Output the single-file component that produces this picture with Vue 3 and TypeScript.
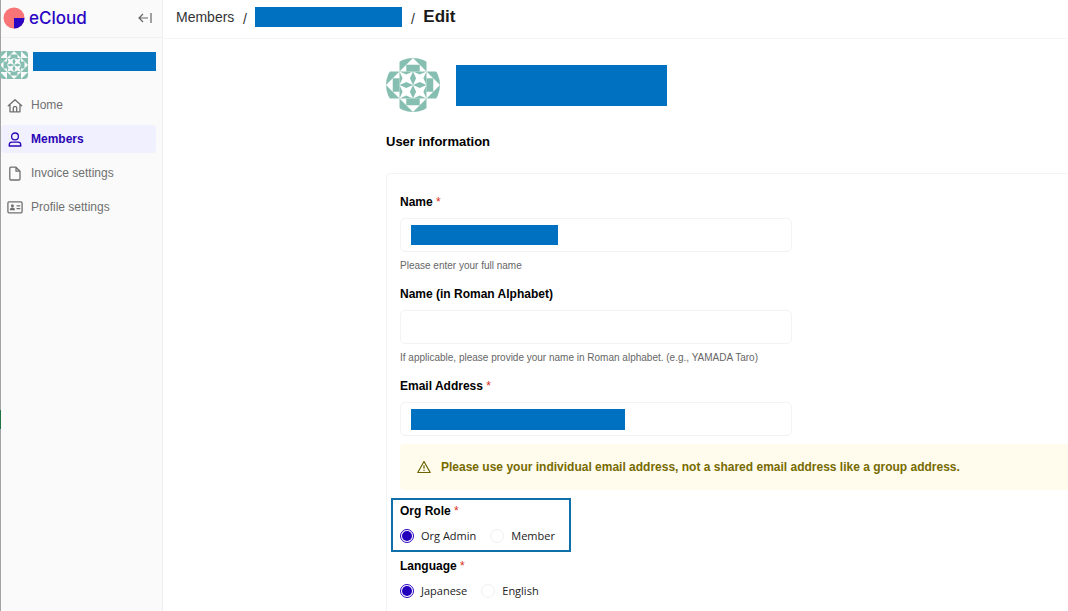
<script setup lang="ts">
import { ref } from 'vue'

interface NavItem {
  id: string
  label: string
  active?: boolean
}

const navItems: NavItem[] = [
  { id: 'home', label: 'Home' },
  { id: 'members', label: 'Members', active: true },
  { id: 'invoice', label: 'Invoice settings' },
  { id: 'profile', label: 'Profile settings' },
]

const roles = ['Org Admin', 'Member']
const languages = ['Japanese', 'English']

const name = ref('')
const romanName = ref('')
const email = ref('')
const role = ref('Org Admin')
const language = ref('Japanese')
const quarterTurns = [0, 90, 180, 270]
</script>

<template>
  <svg class="defs" width="0" height="0" aria-hidden="true">
    <defs>
      <g id="identicon-quarter">
        <path fill="#86bfb1" d="M0 0H10L0 10Z" />
        <path fill="#86bfb1" d="M10 0H20L10 10Z" />
        <path fill="#86bfb1" d="M20 0H30V10Z" />
        <path fill="#86bfb1" d="M15 5H25V10H15Z" />
        <path
          fill="#86bfb1"
          fill-rule="evenodd"
          d="M10 10H20V20H10ZM10 10L15 12.3L20 10L17.7 15L20 20L15 17.7L10 20L12.3 15Z"
        />
      </g>
      <g id="identicon">
        <use
          v-for="turn in quarterTurns"
          :key="turn"
          href="#identicon-quarter"
          :transform="`rotate(${turn} 20 20)`"
        />
      </g>
    </defs>
  </svg>

  <div class="app">
    <aside class="sidebar">
      <span class="edge-mark"></span>
      <div class="brand">
        <a class="logo" href="#">
          <svg width="22" height="22" viewBox="0 0 22 22" aria-hidden="true">
            <circle cx="11" cy="11" r="10.5" fill="#f87477" />
            <path fill="#2b05c4" d="M11 11H21.5A10.5 10.5 0 0 1 11 21.5Z" />
          </svg>
          <span>eCloud</span>
        </a>
        <button class="collapse" type="button" aria-label="Collapse sidebar">
          <svg width="14" height="12" viewBox="0 0 14 12" fill="none" stroke="#666" stroke-width="1.2">
            <path d="M10 6H1M5 2L1 6L5 10M13 1V11" />
          </svg>
        </button>
      </div>

      <div class="account">
        <svg class="account-icon" width="28" height="28" viewBox="0 0 40 40" aria-hidden="true">
          <use href="#identicon" />
        </svg>
        <span class="masked account-name"></span>
      </div>

      <nav class="nav">
        <a
          v-for="item in navItems"
          :key="item.id"
          href="#"
          class="nav-item"
          :class="{ active: item.active }"
        >
          <svg
            width="16"
            height="16"
            viewBox="0 0 16 16"
            fill="none"
            stroke="currentColor"
            stroke-width="1.3"
            stroke-linejoin="round"
            stroke-linecap="round"
            aria-hidden="true"
          >
            <template v-if="item.id === 'home'">
              <path d="M1.3 8.7L8 2.7L14.7 8.7M3 7.5V14.8H13V7.5M6.3 14.5V10.7Q6.3 9.7 7.3 9.7H8.7Q9.7 9.7 9.7 10.7V14.5" />
            </template>
            <template v-else-if="item.id === 'members'">
              <circle cx="8" cy="5.4" r="3.4" />
              <path d="M2.2 15V14Q2.2 11.2 5 11.2H11Q13.8 11.2 13.8 14V15Z" />
            </template>
            <template v-else-if="item.id === 'invoice'">
              <path d="M3.8 2.2H9L13 6.2V13.8Q13 15 11.8 15H3.8Q2.8 15 2.8 13.8V3.4Q2.8 2.2 3.8 2.2ZM9 2.4V6.2H12.8" />
            </template>
            <template v-else>
              <rect x="0.9" y="2.8" width="14.2" height="11" rx="1.2" />
              <circle cx="5.4" cy="6.8" r="1.5" fill="currentColor" stroke="none" />
              <path d="M2.8 11.3Q2.8 8.6 5.4 8.6T8 11.3Z" fill="currentColor" stroke="none" />
              <path d="M10 6.8H12.8M10 9.6H12.8" />
            </template>
          </svg>
          <span>{{ item.label }}</span>
        </a>
      </nav>
    </aside>

    <div class="page">
      <header class="topbar">
        <a class="crumb" href="#">Members</a>
        <span class="slash">/</span>
        <span class="masked crumb-name"></span>
        <span class="slash">/</span>
        <h1>Edit</h1>
      </header>

      <main class="content">
        <div class="profile">
          <svg class="avatar" width="54" height="54" viewBox="0 0 40 40" aria-hidden="true">
            <use href="#identicon" />
          </svg>
          <span class="masked profile-name"></span>
        </div>

        <h2>User information</h2>

        <form class="card" @submit.prevent>
          <div class="field">
            <label class="title" for="name">Name <span class="required">*</span></label>
            <div class="box">
              <span class="masked name-value"></span>
              <input id="name" v-model="name" type="text" />
            </div>
            <p class="hint">Please enter your full name</p>
          </div>

          <div class="field">
            <label class="title" for="roman">Name (in Roman Alphabet)</label>
            <div class="box">
              <input id="roman" v-model="romanName" type="text" />
            </div>
            <p class="hint">
              If applicable, please provide your name in Roman alphabet. (e.g., YAMADA Taro)
            </p>
          </div>

          <div class="field">
            <label class="title" for="email">Email Address <span class="required">*</span></label>
            <div class="box">
              <span class="masked email-value"></span>
              <input id="email" v-model="email" type="email" />
            </div>
          </div>

          <div class="notice">
            <svg
              width="14"
              height="14"
              viewBox="0 0 14 14"
              fill="none"
              stroke="#6b6300"
              stroke-width="1.2"
              stroke-linejoin="round"
              aria-hidden="true"
            >
              <path d="M7 1.5L13.2 12.5H0.8ZM7 5.2V8.8M7 9.8V11" />
            </svg>
            <span>Please use your individual email address, not a shared email address like a group address.</span>
          </div>

          <fieldset class="choices highlighted">
            <legend class="title">Org Role <span class="required">*</span></legend>
            <div class="options">
              <label v-for="option in roles" :key="option">
                <input v-model="role" type="radio" name="role" :value="option" />
                {{ option }}
              </label>
            </div>
          </fieldset>

          <fieldset class="choices">
            <legend class="title">Language <span class="required">*</span></legend>
            <div class="options">
              <label v-for="option in languages" :key="option">
                <input v-model="language" type="radio" name="language" :value="option" />
                {{ option }}
              </label>
            </div>
          </fieldset>
        </form>
      </main>
    </div>
  </div>
</template>

<style>
body {
  margin: 0;
  overflow: hidden;
  background: #fff;
}
</style>

<style scoped>
.defs {
  position: absolute;
}

.app {
  display: flex;
  height: 100vh;
  overflow: hidden;
  font-family: 'Liberation Sans', Arial, sans-serif;
  font-size: 12px;
  line-height: 16px;
  color: #000;
}

a {
  color: inherit;
  text-decoration: none;
}

.masked {
  flex: none;
  background: #0070c0;
}

.sidebar {
  position: relative;
  box-sizing: border-box;
  flex: none;
  width: 163px;
  background: #fafafa;
  border-left: 1px solid #a3a3a3;
  border-right: 1px solid #f0f0f0;
}

.edge-mark {
  position: absolute;
  left: -1px;
  top: 410px;
  width: 1px;
  height: 19px;
  background: #217346;
}

.brand {
  display: flex;
  align-items: center;
  justify-content: space-between;
  box-sizing: border-box;
  height: 38px;
  padding: 0 10px 2px 2px;
  border-bottom: 1px solid #f0f0f0;
}

.logo {
  display: flex;
  align-items: center;
  gap: 4px;
  font-family: Inter, 'Liberation Sans', sans-serif;
  font-size: 17px;
  font-weight: 500;
  color: #2b05c4;
}

.collapse {
  display: flex;
  padding: 0;
  border: 0;
  background: none;
}

.account {
  display: flex;
  align-items: flex-start;
  gap: 5px;
  margin-top: 13px;
}

.account-icon {
  margin-left: -1px;
  border-radius: 4px;
}

.account-name {
  width: 123px;
  height: 19px;
  margin-top: 1px;
}

.nav {
  display: flex;
  flex-direction: column;
  gap: 6px;
  margin: 12px 6px 0 0;
}

.nav-item {
  display: flex;
  align-items: center;
  gap: 8px;
  height: 28px;
  padding-left: 6px;
  border-radius: 4px;
  color: #707070;
}

.nav-item.active {
  background: #f0f0ff;
  color: #2b05b4;
  font-weight: bold;
}

.page {
  flex: 1;
  min-width: 0;
}

.topbar {
  display: flex;
  align-items: center;
  box-sizing: border-box;
  height: 39px;
  padding: 0 13px 4px;
  border-bottom: 1px solid #f5f5f5;
  font-size: 14px;
  color: #333;
}

.slash {
  width: 21px;
  padding-top: 4px;
  text-align: center;
}

.crumb-name {
  width: 147px;
  height: 20px;
}

h1 {
  margin: 0;
  font-size: 17px;
  line-height: 20px;
  color: #1a1a1a;
}

.content {
  padding: 19px 0 0 223px;
}

.profile {
  display: flex;
  align-items: center;
  gap: 16px;
}

.avatar {
  border-radius: 50%;
}

.profile-name {
  width: 211px;
  height: 41px;
}

h2 {
  margin: 22px 0 23px;
  font-size: 13px;
  line-height: 16px;
}

.card {
  padding: 20px 0 20px 13px;
  border: 1px solid #f3f3f3;
  border-right: 0;
  border-radius: 4px 0 0 0;
}

.title {
  display: block;
  padding: 0;
  font-weight: bold;
}

.required {
  font-weight: normal;
  color: #d92d20;
}

.field + .field {
  margin-top: 12px;
}

.box {
  display: flex;
  align-items: center;
  box-sizing: border-box;
  max-width: 392px;
  height: 34px;
  margin-top: 8px;
  padding: 0 10px;
  border: 1px solid #f3f3f3;
  border-radius: 5px;
}

.box input {
  flex: 1;
  min-width: 0;
  padding: 0;
  border: 0;
  outline: 0;
  background: none;
  font: inherit;
}

.name-value {
  width: 147px;
  height: 20px;
}

.email-value {
  width: 214px;
  height: 21px;
}

.hint {
  margin: 6px 0 0;
  font-size: 10px;
  color: #666;
}

.notice {
  display: flex;
  align-items: center;
  gap: 10px;
  height: 46px;
  margin-top: 8px;
  padding-left: 17px;
  background: #fffcee;
  border-radius: 4px 0 0 4px;
  font-weight: bold;
  color: #776a00;
  white-space: nowrap;
}

.choices {
  min-width: 0;
  margin: 6px 0 0;
  padding: 0;
  border: 0;
}

.choices .title {
  float: left;
  width: 100%;
}

.highlighted {
  box-sizing: border-box;
  width: 180px;
  height: 54px;
  margin: 8px 0 0 -9px;
  padding: 3px 7px;
  border: 2px solid #0f6fa8;
}

.options {
  display: flex;
  clear: both;
  gap: 14px;
  padding-top: 9px;
  font-family: 'Open Sans', 'Noto Sans', sans-serif;
  font-size: 11px;
  color: #222;
}

.options label {
  display: flex;
  align-items: center;
  gap: 7px;
  white-space: nowrap;
}

.options input {
  appearance: none;
  box-sizing: border-box;
  width: 14px;
  height: 14px;
  margin: 0;
  padding: 1px;
  border: 1px solid #f0f0f0;
  border-radius: 50%;
  background: #fff;
}

.options input:checked {
  border-color: #2b05c4;
  background: #2200bb content-box;
}
</style>
